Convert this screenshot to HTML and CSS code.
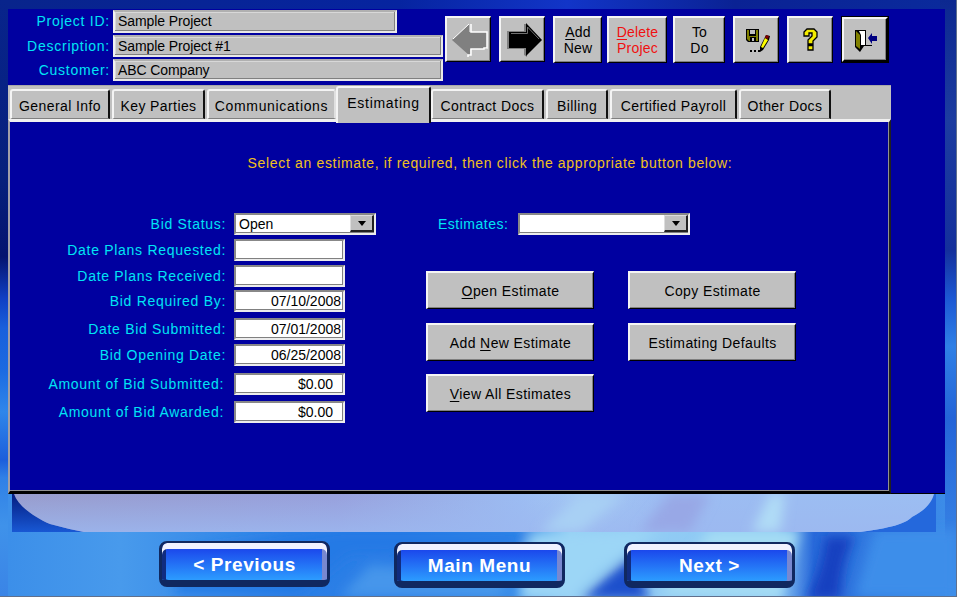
FILE: index.html
```html
<!DOCTYPE html>
<html lang="en">
<head>
<meta charset="utf-8">
<title>Project - Estimating</title>
<link rel="stylesheet" href="styles.css">
</head>
<body>
<svg class="backdrop" viewBox="0 0 957 597" preserveAspectRatio="none" aria-hidden="true">
  <defs>
    <linearGradient id="top" x1="0" x2="1" y1="0" y2="0"><stop offset="0" stop-color="#08248c"/><stop offset=".42" stop-color="#0624a0"/><stop offset=".6" stop-color="#1235c8"/><stop offset=".78" stop-color="#0a2294"/><stop offset="1" stop-color="#0a2a9c"/></linearGradient>
    <linearGradient id="side" x1="0" x2="0" y1="0" y2="1"><stop offset="0" stop-color="#08248c"/><stop offset=".3" stop-color="#06207c"/><stop offset=".43" stop-color="#041470"/><stop offset=".5" stop-color="#1040c4"/><stop offset=".55" stop-color="#1860dc"/><stop offset=".62" stop-color="#1c6ae2"/><stop offset=".69" stop-color="#2f86ea"/><stop offset=".77" stop-color="#1c5edc"/><stop offset=".8" stop-color="#2f80e6"/><stop offset=".88" stop-color="#3f92ea"/><stop offset="1" stop-color="#3a84e6"/></linearGradient>
    <linearGradient id="right" x1="0" x2="0" y1="0" y2="1"><stop offset="0" stop-color="#0c2890"/><stop offset=".2" stop-color="#1c3ca0"/><stop offset=".42" stop-color="#14309c"/><stop offset=".5" stop-color="#1c58d4"/><stop offset=".58" stop-color="#2f80e6"/><stop offset=".7" stop-color="#2464d8"/><stop offset="1" stop-color="#3f90ea"/></linearGradient>
    <linearGradient id="floor" x1="0" x2="1" y1="0" y2="0"><stop offset="0" stop-color="#3c8fe9"/><stop offset=".12" stop-color="#489aec"/><stop offset=".3" stop-color="#2c80e6"/><stop offset=".42" stop-color="#2a7ce6"/><stop offset=".54" stop-color="#388ce8"/><stop offset=".6" stop-color="#94cff4"/><stop offset=".82" stop-color="#8cc6f4"/><stop offset=".86" stop-color="#286ada"/><stop offset="1" stop-color="#3c8ce8"/></linearGradient>
    <linearGradient id="sheet" x1="0" x2="1" y1="0" y2="0"><stop offset="0" stop-color="#989ccc"/><stop offset=".35" stop-color="#98a0dc"/><stop offset=".55" stop-color="#9cbcf2"/><stop offset=".62" stop-color="#a4c8f4"/><stop offset=".7" stop-color="#9cbcf2"/><stop offset="1" stop-color="#9cbef2"/></linearGradient>
    <linearGradient id="shade" x1="0" x2="0" y1="0" y2="1"><stop offset="0" stop-color="#9cb8f0" stop-opacity="0"/><stop offset="1" stop-color="#9cb8f0" stop-opacity=".8"/></linearGradient>
    <linearGradient id="corner" x1="0" x2="0" y1="0" y2="1"><stop offset="0" stop-color="#041c80"/><stop offset="1" stop-color="#1858d4"/></linearGradient>
    <filter id="soft" x="-50%" y="-50%" width="200%" height="200%"><feGaussianBlur stdDeviation="6"/></filter>
    <clipPath id="sheetclip"><path d="M14 494C18 506 34 517 50 524Q68 529 84 532H860C890 528 905 524 912 517C926 510 932 502 934 494Z"/></clipPath>
  </defs>
  <rect width="957" height="597" fill="url(#side)"/>
  <rect x="940" width="17" height="597" fill="url(#right)"/>
  <rect x="8" width="932" height="20" fill="url(#top)"/>
  <rect x="8" y="494" width="937" height="103" fill="url(#floor)"/>
  <g filter="url(#soft)">
    <path d="M175 550L340 530H535L510 550 350 555 300 595H175Z" fill="#2478e4" opacity=".75"/>
    <path d="M340 597L370 565 510 575 500 597Z" fill="#4c9cec" opacity=".8"/>
    <path d="M530 535L660 530 600 570 570 600H520Z" fill="#9cd6f6"/>
    <path d="M632 555L580 600H650Z" fill="#1c50cc"/>
    <path d="M660 595L710 530H800L780 600Z" fill="#a4dcf4"/>
    <path d="M825 536H855Q842 560 840 600H806Q822 570 825 536Z" fill="#1440c0"/>
    <path d="M875 530H957V597H855Z" fill="#3c8eea"/>
  </g>
  <rect x="12" y="494" width="924" height="38" fill="url(#corner)"/>
  <rect x="780" y="494" width="156" height="38" fill="#2468dc"/>
  <g clip-path="url(#sheetclip)">
    <rect x="12" y="494" width="924" height="38" fill="url(#sheet)"/>
    <rect x="12" y="494" width="924" height="38" fill="url(#shade)"/>
    <g filter="url(#soft)">
      <path d="M580 494H625L580 532H540Z" fill="#a8d0f4"/>
      <path d="M670 494H710L690 532H640Z" fill="#98a8e6"/>
      <path d="M770 494H785L780 532H752Z" fill="#b0dcf6"/>
    </g>
  </g>
  <path d="M0 596.5H957M956.5 0V597" stroke="#60708c"/>
</svg>
<main class="window">
  <header class="head">
    <dl class="identity">
      <dt>Project ID:</dt><dd class="short">Sample Project</dd>
      <dt>Description:</dt><dd>Sample Project #1</dd>
      <dt>Customer:</dt><dd>ABC Company</dd>
    </dl>
    <div class="tools">
      <button class="tool b46 arrow" aria-label="Previous record"><svg viewBox="0 0 42 42" width="42" height="42"><path d="M4 21L21 5V13H39V30H22V37Z" fill="#808080"/><path d="M5 20L21 5" fill="none" stroke="#fff"/><path d="M23 5V13H39V29H36V30H23V36H20V38" fill="none" stroke="#fff" stroke-width="1.5"/></svg></button>
      <button class="tool b46 arrow" aria-label="Next record"><svg viewBox="0 0 42 42" width="42" height="42"><path d="M5 12H22V5H25V38L22 36V30H5Z" fill="#808080"/><path d="M7 13H24V4L40 21 24 37V29H7Z" fill="#000"/><path d="M9 14.500H25.500V8L37 20" fill="none" stroke="#707070"/></svg></button>
      <button class="tool b49"><span><u>A</u>dd</span><span>New</span></button>
      <button class="tool b60 red"><span><u>D</u>elete</span><span>Projec</span></button>
      <button class="tool b52"><span>To</span><span>Do</span></button>
      <button class="tool b46" aria-label="Save"><svg viewBox="0 0 30 26" width="30" height="26"><path d="M4 2H17V15H6L4 13Z" fill="#000"/><path d="M5 3H7V9H14V3H16V14H14V10H8V14H7L5 12Z" fill="#808000"/><path d="M8 3H13V7H8ZM10 11H12V14H10Z" fill="#c0c0c0"/><path d="M24 8L28 9 27 13 21 23 18 25V20Z" fill="#000"/><path d="M23 11L26 13 21 21 19 20Z" fill="#ff0"/><path d="M24 8L27 9 26 12 23 11Z" fill="#800000"/><path d="M8 23H10V25H8ZM12 23H14V25H12ZM16 23H18V25H16Z" fill="#000"/></svg></button>
      <button class="tool b46" aria-label="Help"><svg viewBox="0 0 20 26" width="20" height="26"><path d="M3 9V5L6 2H13L16 5V10L12 14V17H7V13L11 9V6H8V9ZM7 18.500H12V23H7Z" fill="#f4ec00" stroke="#000" stroke-width="1.3"/></svg></button>
      <button class="tool b46 current" aria-label="Exit"><svg viewBox="0 0 26 26" width="26" height="26"><path d="M3 3H14V18H20V19H12L8 25 3 20Z" fill="#000"/><path d="M7 4H13V18H9V8Z" fill="#fff"/><path d="M4 4L8 8V22L4 19Z" fill="#808000"/><path d="M16 11L20 6V9H25V14H20V17Z" fill="#000080"/></svg></button>
    </div>
  </header>
  <nav class="tabs">
    <a class="t1">General Info</a><a class="t2">Key Parties</a><a class="t3">Communications</a><a class="t4">Estimating</a><a class="t5">Contract Docs</a><a class="t6">Billing</a><a class="t7">Certified Payroll</a><a class="t8">Other Docs</a>
  </nav>
  <section class="page">
    <p class="hint">Select an estimate, if required, then click the appropriate button below:</p>
    <div class="columns">
      <div class="bid">
        <label>Bid Status:</label><div class="combo"><span>Open</span><i></i></div>
        <label>Date Plans Requested:</label><div class="box"></div>
        <label>Date Plans Received:</label><div class="box"></div>
        <label>Bid Required By:</label><div class="box">07/10/2008</div>
        <label>Date Bid Submitted:</label><div class="box">07/01/2008</div>
        <label>Bid Opening Date:</label><div class="box">06/25/2008</div>
        <label class="money">Amount of Bid Submitted:</label><div class="box money">$0.00</div>
        <label class="money">Amount of Bid Awarded:</label><div class="box money">$0.00</div>
      </div>
      <div class="estimates">
        <div class="pick"><label>Estimates:</label><div class="combo"><span></span><i></i></div></div>
        <div class="actions">
          <button><span><u>O</u>pen Estimate</span></button><button><span>Copy Estimate</span></button>
          <button><span>Add <u>N</u>ew Estimate</span></button><button><span>Estimating Defaults</span></button>
          <button><span><u>V</u>iew All Estimates</span></button>
        </div>
      </div>
    </div>
  </section>
</main>
<footer class="footer">
  <button class="pill first">&lt; Previous</button>
  <button class="pill">Main Menu</button>
  <button class="pill">Next &gt;</button>
</footer>
</body>
</html>
```
FILE: styles.css
```css
* { box-sizing: border-box; }
body { margin: 0; width: 957px; height: 597px; overflow: hidden; font: 14px/16px "Liberation Sans", Arial, sans-serif; letter-spacing: .4px; color: #000; background: #3a8cea; }
button { font: inherit; letter-spacing: inherit; color: inherit; border: 0; padding: 0; border-radius: 0; }
u { text-underline-offset: 2px; }
.backdrop { position: absolute; inset: 0; width: 957px; height: 597px; z-index: -1; }
.window { margin: 9px 0 0 8px; width: 937px; height: 485px; background: #0000a0; border-bottom: 1px solid #000; }
.head { display: flex; height: 76px; }
.identity { margin: 1px 0 0; width: 435px; display: grid; grid-template-columns: 105px 330px; grid-template-rows: 23px 22px 22px; row-gap: 2px; }
.identity dt { color: #00e4f4; text-align: right; padding: 3px 3px 0 0; letter-spacing: .75px; }
.identity dd { margin: 0; background: #c0c0c0; border: 2px solid #e8e8e8; border-top-color: #b0b0b0; border-left-color: #f0f0f0; box-shadow: inset -1px -1px #808080, inset 1px 1px #d8d8d8; padding: 1px 3px; letter-spacing: -.1px; }
.identity .short { width: 284px; }
.tools { display: flex; padding: 7px 0 0 2px; letter-spacing: .2px; }
.tool, .actions button { background: #c0c0c0; border: solid; border-width: 2px 1px 1px 2px; border-color: #f4f4f4 #000 #000 #f4f4f4; box-shadow: inset -1px -1px #808080; }
.tool { display: flex; flex-direction: column; align-items: center; justify-content: center; height: 47px; margin-right: 8px; }
.tool svg { display: block; }
.b46 { width: 46px; }
.b49 { width: 49px; margin-right: 5px; }
.b60 { width: 60px; margin-right: 6px; }
.b52 { width: 52px; }
.arrow { height: 46px; }
.red { color: #f01010; }
.current { outline: 1px solid #000; margin-top: 1px; height: 45px; margin-left: 1px; border-bottom-width: 2px; border-right-width: 2px; }
.tabs { width: 883px; height: 34px; background: #c0c0c0; display: flex; align-items: flex-end; padding-left: 2px; box-shadow: inset 0 1px #a8a8a8; }
.tabs a { height: 30px; margin-right: 2px; border: solid; border-width: 2px 2px 1px; border-color: #f4f4f4 #101010 #808080 #f4f4f4; border-radius: 3px 3px 0 0; text-align: center; padding-top: 7px; white-space: nowrap; }
.t1 { width: 100px; }
.t2 { width: 93px; }
.t3 { width: 129px; letter-spacing: .65px; }
.t5 { width: 113px; }
.t6 { width: 62px; }
.t7 { width: 127px; }
.t8 { width: 92px; }
.tabs .t3 { margin-right: 0; border-right-color: #e0e0e0; }
.tabs .t4 { width: 95px; height: 37px; margin-bottom: -4px; margin-right: 0; border-bottom: 0; background: #c0c0c0; position: relative; letter-spacing: .7px; }
.page { width: 883px; height: 375px; border: solid; border-width: 3px 2px; border-bottom-width: 3px; border-color: #f0f0f0 #202020 #000 #a0a0a8; box-shadow: inset -1px -1px #909090; }
.hint { margin: 33px 0 0; width: 880px; padding-left: 80px; text-align: center; color: #f0c020; letter-spacing: .66px; white-space: nowrap; }
.columns { display: flex; margin-top: 42px; }
.bid { width: 366px; display: grid; grid-template-columns: 224px 142px; grid-template-rows: 23px 23px 22px 23px 23px 23px 23px 23px; row-gap: 3px; }
.bid label { color: #00e4f4; text-align: right; padding: 3px 8px 0 0; letter-spacing: .7px; white-space: nowrap; }
.bid label.money { padding-right: 10px; }
.bid > :nth-child(n+9) { position: relative; top: 2px; }
.bid > :nth-child(n+13) { top: 5px; }
.bid > :nth-child(n+15) { top: 7px; }
.box, .combo { background: #fff; border: 2px solid; border-color: #888 #ececec #ececec #888; box-shadow: inset -1px -1px #808080; height: 22px; letter-spacing: 0; }
.box { width: 111px; text-align: right; padding: 1px 2px 0 0; }
.box.money { padding-right: 10px; }
.combo { display: flex; justify-content: space-between; width: 142px; }
.combo span { padding: 1px 3px; letter-spacing: 0; }
.combo i { width: 24px; height: 17px; background: #c0c0c0; border: 1px solid; border-width: 1px 2px 2px 1px; border-color: #ddd #202020 #202020 #ddd; display: flex; justify-content: center; padding-top: 5px; }
.combo i::before { content: ""; border: 4px solid transparent; border-top: 5px solid #000; height: 0; }
.estimates { margin-left: 50px; }
.pick { display: flex; color: #00e4f4; padding-left: 12px; }
.pick label { padding-top: 3px; width: 80px; letter-spacing: .5px; }
.pick .combo { width: 172px; }
.actions { margin-top: 36px; display: grid; grid-template-columns: 168px 168px; grid-template-rows: 38px 38px 38px; gap: 14px 34px; }
.actions button:last-child { margin-top: -1px; height: 38px; }
.footer { display: flex; padding: 48px 0 0 159px; gap: 64px; }
.pill { width: 171px; height: 46px; border: 3px solid #102860; border-width: 2px 3px 7px; border-radius: 8px; background: linear-gradient(#1838e8, #2c9cff); box-shadow: inset 0 6px #f0f2ff, inset -5px 0 #7888d0, inset 4px 0 #102c80; color: #fff; font: bold 19px/22px "Liberation Sans", Arial, sans-serif; letter-spacing: .6px; padding-top: 7px; }
.footer .first { margin-top: -1px; }
.pill:last-child { margin-left: -5px; }
```
